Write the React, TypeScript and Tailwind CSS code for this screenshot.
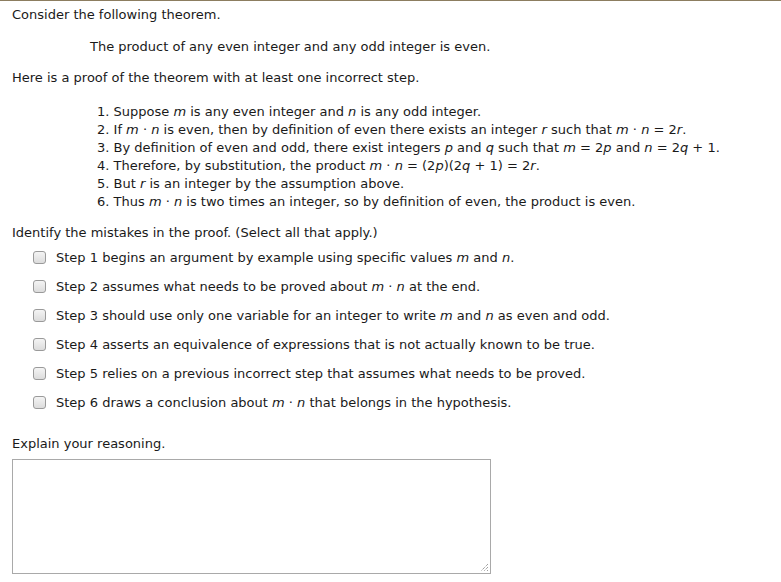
import type { ReactNode } from 'react'

const V = ({ children }: { children: ReactNode }) => <i>{children}</i>

const steps: ReactNode[] = [
  <>Suppose <V>m</V> is any even integer and <V>n</V> is any odd integer.</>,
  <>If <V>m</V> · <V>n</V> is even, then by definition of even there exists an integer <V>r</V> such that <V>m</V> · <V>n</V> = 2<V>r</V>.</>,
  <>By definition of even and odd, there exist integers <V>p</V> and <V>q</V> such that <V>m</V> = 2<V>p</V> and <V>n</V> = 2<V>q</V> + 1.</>,
  <>Therefore, by substitution, the product <V>m</V> · <V>n</V> = (2<V>p</V>)(2<V>q</V> + 1) = 2<V>r</V>.</>,
  <>But <V>r</V> is an integer by the assumption above.</>,
  <>Thus <V>m</V> · <V>n</V> is two times an integer, so by definition of even, the product is even.</>,
]

const choices: ReactNode[] = [
  <>Step 1 begins an argument by example using specific values <V>m</V> and <V>n</V>.</>,
  <>Step 2 assumes what needs to be proved about <V>m</V> · <V>n</V> at the end.</>,
  <>Step 3 should use only one variable for an integer to write <V>m</V> and <V>n</V> as even and odd.</>,
  <>Step 4 asserts an equivalence of expressions that is not actually known to be true.</>,
  <>Step 5 relies on a previous incorrect step that assumes what needs to be proved.</>,
  <>Step 6 draws a conclusion about <V>m</V> · <V>n</V> that belongs in the hypothesis.</>,
]

export default function App() {
  return (
    <div className="w-[781px] h-[582px] bg-white border-t border-[#8c7d60] text-[13px] leading-[18px] text-[#1a1a1a] font-['DejaVu_Sans',Verdana,sans-serif]">
      <div className="pl-3 pt-[5px]">
        <p>Consider the following theorem.</p>
        <p className="pl-[78px] mt-[14px]">The product of any even integer and any odd integer is even.</p>
        <p className="mt-[13px]">Here is a proof of the theorem with at least one incorrect step.</p>

        <ol className="mt-[16px] pl-[85px]">
          {steps.map((s, i) => (
            <li key={i}>
              {i + 1}. {s}
            </li>
          ))}
        </ol>

        <p className="mt-[13px]">Identify the mistakes in the proof. (Select all that apply.)</p>

        <div className="mt-[1px] pl-[21px] flex flex-col">
          {choices.map((c, i) => (
            <label key={i} className="h-[29px] flex items-center">
              <span className="w-[13px] h-[13px] rounded-[3px] border border-[#9a9a9a] bg-gradient-to-b from-[#f4f4f4] to-[#dcdcdc] shrink-0" />
              <span className="ml-[10px]">{c}</span>
            </label>
          ))}
        </div>

        <p className="mt-[18px]">Explain your reasoning.</p>

        <div className="mt-[6px] w-[479px] h-[115px] border border-[#a9a9a9] relative">
          <svg className="absolute right-[1px] bottom-[1px]" width="10" height="10" viewBox="0 0 10 10">
            <path d="M9 2L2 9M9 5L5 9M9 8L8 9" stroke="#777" strokeWidth="1" strokeDasharray="1 1" />
          </svg>
        </div>
      </div>
    </div>
  )
}
